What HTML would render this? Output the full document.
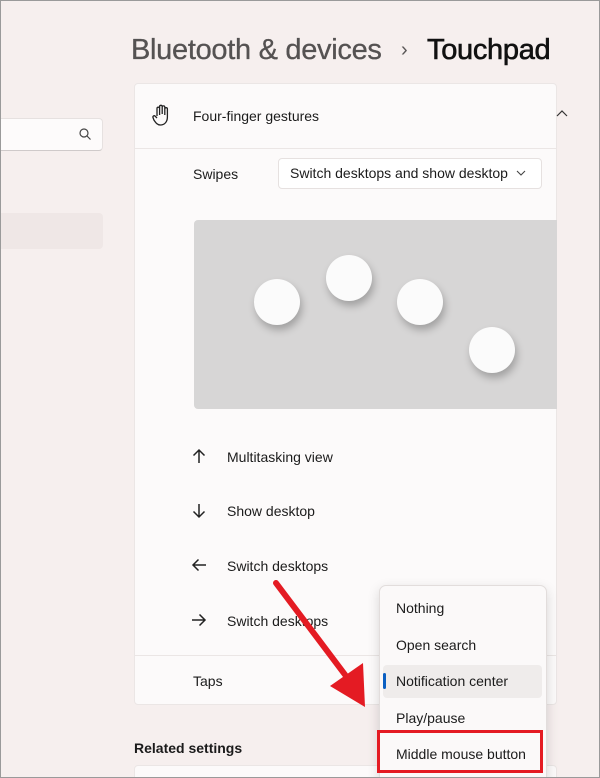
<!DOCTYPE html>
<html><head><meta charset="utf-8"><style>
*{margin:0;padding:0;box-sizing:border-box}
html,body{width:600px;height:778px;overflow:hidden}
body{background:#f6efee;font-family:"Liberation Sans",sans-serif;color:#1b1b1b;position:relative}
.a{position:absolute}
.t{font-size:14px}
</style></head><body>
<div class="a" style="left:131px;top:34px;font-size:29px;color:#555252;letter-spacing:-0.3px;-webkit-text-stroke:0.3px #555252">Bluetooth &amp; devices</div>
<div class="a" style="left:401px;top:39px;font-size:20px;color:#5a5757">›</div>
<div class="a" style="left:427px;top:34px;font-size:29px;color:#111;letter-spacing:-0.3px;-webkit-text-stroke:0.6px #111">Touchpad</div>
<!-- left search -->
<div class="a" style="left:-5px;top:118px;width:108px;height:33px;background:#fdfbfb;border:1px solid #e6e1e0;border-bottom-color:#cfcaca;border-radius:4px"></div>
<svg class="a" style="left:78px;top:127px" width="14" height="14" viewBox="0 0 14 14"><circle cx="6" cy="6" r="4" fill="none" stroke="#444" stroke-width="1.2"/><path d="M9 9l3.5 3.5" stroke="#444" stroke-width="1.2"/></svg>
<div class="a" style="left:-5px;top:213px;width:108px;height:36px;background:#efe7e6;border-radius:4px"></div>
<!-- card -->
<div class="a" style="left:134px;top:83px;width:423px;height:622px;background:#fcfafa;border:1px solid #ebe6e5;border-radius:4px"></div>
<div class="a" style="left:134px;top:148px;width:423px;height:1px;background:#ebe6e5"></div>
<svg class="a" style="left:151px;top:104px" width="22" height="24" viewBox="0 0 22 24"><path d="M6 12V4.5a1.3 1.3 0 0 1 2.6 0V11M8.6 10V2.6a1.3 1.3 0 0 1 2.6 0V10M11.2 10V3.2a1.3 1.3 0 0 1 2.6 0V11M13.8 11V5a1.3 1.3 0 0 1 2.6 0v8c0 5-3 8-7 8-3 0-4.5-2-6.5-5L2 13.5a1.3 1.3 0 0 1 2-1.5L6 14" fill="none" stroke="#222" stroke-width="1.3" stroke-linejoin="round"/></svg>
<div class="a t" style="left:193px;top:108px">Four-finger gestures</div>
<svg class="a" style="left:555px;top:109px" width="14" height="10" viewBox="0 0 14 10"><path d="M2 7l5-5 5 5" fill="none" stroke="#333" stroke-width="1.2"/></svg>
<div class="a t" style="left:193px;top:166px">Swipes</div>
<div class="a" style="left:278px;top:158px;width:264px;height:31px;background:#fff;border:1px solid #e6e1e0;border-radius:4px"></div>
<div class="a t" style="left:290px;top:165px">Switch desktops and show desktop</div>
<svg class="a" style="left:516px;top:169px" width="10" height="8" viewBox="0 0 10 8"><path d="M1 2l4 4 4-4" fill="none" stroke="#444" stroke-width="1.1"/></svg>
<div class="a" style="left:194px;top:220px;width:363px;height:189px;background:#d7d6d6;border-radius:4px 0 0 4px"></div>
<div class="a" style="left:254px;top:279px;width:46px;height:46px;border-radius:50%;background:#fbfbfb;box-shadow:2px 5px 8px rgba(0,0,0,.25)"></div>
<div class="a" style="left:326px;top:255px;width:46px;height:46px;border-radius:50%;background:#fbfbfb;box-shadow:2px 5px 8px rgba(0,0,0,.25)"></div>
<div class="a" style="left:397px;top:279px;width:46px;height:46px;border-radius:50%;background:#fbfbfb;box-shadow:2px 5px 8px rgba(0,0,0,.25)"></div>
<div class="a" style="left:469px;top:327px;width:46px;height:46px;border-radius:50%;background:#fbfbfb;box-shadow:2px 5px 8px rgba(0,0,0,.25)"></div>
<svg class="a" style="left:190px;top:447px" width="18" height="18" viewBox="0 0 18 18"><path d="M9 16V3M3.5 8.5L9 3l5.5 5.5" fill="none" stroke="#222" stroke-width="1.5"/></svg>
<div class="a t" style="left:227px;top:449px">Multitasking view</div>
<svg class="a" style="left:190px;top:502px" width="18" height="18" viewBox="0 0 18 18"><path d="M9 2v13M3.5 9.5L9 15l5.5-5.5" fill="none" stroke="#222" stroke-width="1.5"/></svg>
<div class="a t" style="left:227px;top:503px">Show desktop</div>
<svg class="a" style="left:190px;top:556px" width="18" height="18" viewBox="0 0 18 18"><path d="M16 9H3M8.5 3.5L3 9l5.5 5.5" fill="none" stroke="#222" stroke-width="1.5"/></svg>
<div class="a t" style="left:227px;top:558px">Switch desktops</div>
<svg class="a" style="left:190px;top:611px" width="18" height="18" viewBox="0 0 18 18"><path d="M2 9h13M9.5 3.5L15 9l-5.5 5.5" fill="none" stroke="#222" stroke-width="1.5"/></svg>
<div class="a t" style="left:227px;top:613px">Switch desktops</div>
<div class="a" style="left:134px;top:655px;width:423px;height:1px;background:#ebe6e5"></div>
<div class="a t" style="left:193px;top:673px">Taps</div>
<div class="a" style="left:134px;top:740px;font-size:14px;font-weight:bold">Related settings</div>
<div class="a" style="left:134px;top:765px;width:423px;height:20px;background:#fcfafa;border:1px solid #ebe6e5;border-radius:4px"></div>
<!-- menu -->
<div class="a" style="left:379px;top:585px;width:168px;height:200px;background:#fbf9f9;border:1px solid #e2dddc;border-radius:7px;box-shadow:0 4px 12px rgba(0,0,0,.15)"></div>
<div class="a" style="left:383px;top:665px;width:159px;height:33px;background:#efeceb;border-radius:4px"></div>
<div class="a" style="left:383px;top:673px;width:3px;height:16px;background:#0a5fc2;border-radius:2px"></div>
<div class="a t" style="left:396px;top:600px">Nothing</div>
<div class="a t" style="left:396px;top:637px">Open search</div>
<div class="a t" style="left:396px;top:673px">Notification center</div>
<div class="a t" style="left:396px;top:710px">Play/pause</div>
<div class="a t" style="left:396px;top:746px">Middle mouse button</div>
<div class="a" style="left:377px;top:730px;width:166px;height:43px;border:3px solid #e41b23"></div>
<!-- arrow -->
<svg class="a" style="left:0;top:0" width="600" height="778"><path d="M276 583L349 680" stroke="#e41b23" stroke-width="6" stroke-linecap="round"/><path d="M330 686L363 663L365 707Z" fill="#e41b23"/></svg>
<div class="a" style="left:0;top:0;width:600px;height:778px;border:1px solid #9a9a9a;pointer-events:none"></div>
</body></html>
